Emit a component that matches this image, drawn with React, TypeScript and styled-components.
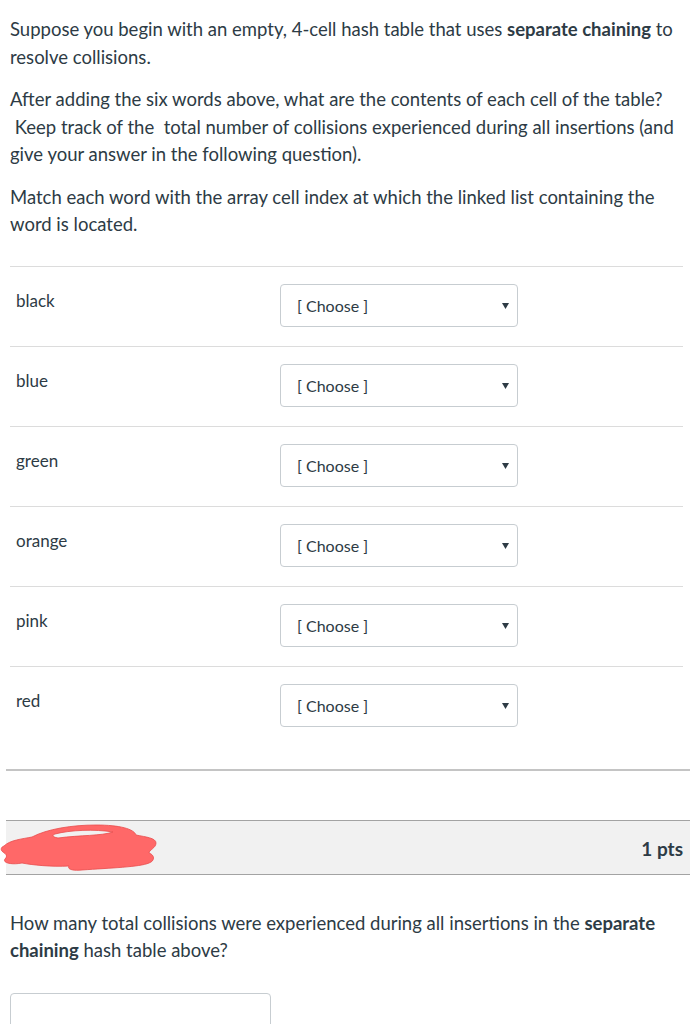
import React from "react";
import styled, { createGlobalStyle } from "styled-components";

const Global = createGlobalStyle`
  html, body { margin: 0; padding: 0; background: #fff; }
  body {
    font-family: Lato, "Noto Sans", "Liberation Sans", sans-serif;
    color: #2d3b45;
    font-size: 16px;
  }
  * { box-sizing: border-box; }
`;

const Page = styled.div`
  width: 690px;
  display: flex;
  flex-direction: column;
`;

const QuestionCard = styled.section`
  margin-left: 6px;
  border-bottom: 2px solid #c4c4c4;
  padding: 16px 7px 23px 4px;
`;

const Text = styled.p`
  margin: 0 0 15px;
  line-height: 27.5px;
  font-size: 18.5px;
`;

const Strong = styled.strong`
  font-weight: 700;
`;

const Matches = styled.div`
  margin-top: 27px;
  display: flex;
  flex-direction: column;
`;

const MatchRow = styled.div`
  height: 80px;
  border-top: 1px solid #dcdcdc;
  display: grid;
  grid-template-columns: 270px 238px;
  align-items: start;
`;

const Label = styled.div`
  padding: 23px 0 0 6px;
  font-size: 17px;
  line-height: 22px;
`;

const Select = styled.div`
  margin-top: 17px;
  height: 43px;
  border: 1px solid #c7cdd1;
  border-radius: 4px;
  background: #fff;
  display: flex;
  align-items: center;
  justify-content: space-between;
  padding: 0 8px 0 16px;
  font-size: 16px;
  color: #2d3b45;
`;

const Arrow = styled.svg`
  width: 7px;
  height: 6px;
  margin-top: 2px;
`;

const Header = styled.div`
  position: relative;
  margin: 49px 0 0 6px;
  height: 55px;
  background: #f1f1f1;
  border-top: 1px solid #a3a3a3;
  border-bottom: 1px solid #a3a3a3;
  display: flex;
  align-items: center;
  justify-content: flex-end;
  padding-right: 7px;
`;

const Points = styled.div`
  font-weight: 700;
  font-size: 19px;
  color: #2d3b45;
  padding-top: 2px;
`;

const Scribble = styled.svg`
  position: absolute;
  left: -6px;
  top: 0px;
  width: 162px;
  height: 52px;
`;

const QuestionBody = styled.section`
  padding: 35px 7px 0 10px;
`;

const AnswerInput = styled.div`
  margin-top: 28px;
  width: 261px;
  height: 40px;
  border: 1px solid #c7cdd1;
  border-radius: 4px;
  background: #fff;
`;

const words = ["black", "blue", "green", "orange", "pink", "red"];

export default function App() {
  return (
    <Page>
      <Global />
      <QuestionCard>
        <Text>
          Suppose you begin with an empty, 4-cell hash table that uses <Strong>separate chaining</Strong> to
          resolve collisions.
        </Text>
        <Text>
          After adding the six words above, what are the contents of each cell of the table?
          <br />
          &nbsp;Keep track of the&nbsp; total number of collisions experienced during all insertions (and give
          your answer in the following question).
        </Text>
        <Text>
          Match each word with the array cell index at which the linked list containing the word is located.
        </Text>
        <Matches>
          {words.map((w) => (
            <MatchRow key={w}>
              <Label>{w}</Label>
              <Select>
                <span>[ Choose ]</span>
                <Arrow viewBox="0 0 7 6">
                  <path d="M0 0 H7 L3.5 6 Z" fill="#2d3b45" />
                </Arrow>
              </Select>
            </MatchRow>
          ))}
        </Matches>
      </QuestionCard>
      <Header>
        <Scribble viewBox="0 0 162 52">
          <path
            fillRule="evenodd"
            fill="#ff6868"
            stroke="#e84b4b"
            strokeWidth="0.8"
            d="M4,25 C10,19 22,18 32,16 C47,8 72,4 96,4 C120,4 134,8 136,14 C146,16 156,17 156,22 C156,27 149,29 149,32 C155,34 155,40 149,42 C140,46 110,47 82,49 C72,50 67,48 69,45 C52,46 32,44 22,42 C12,44 2,42 5,38 C8,35 6,33 3,31 C0,29 1,26 4,25 Z M55,13 C70,9 95,8 113,11 C101,15 81,14 58,17 C52,16 52,14 55,13 Z"
          />
        </Scribble>
        <Points>1 pts</Points>
      </Header>
      <QuestionBody>
        <Text>
          How many total collisions were experienced during all insertions in the <Strong>separate</Strong>{" "}
          <Strong>chaining</Strong> hash table above?
        </Text>
        <AnswerInput />
      </QuestionBody>
    </Page>
  );
}
